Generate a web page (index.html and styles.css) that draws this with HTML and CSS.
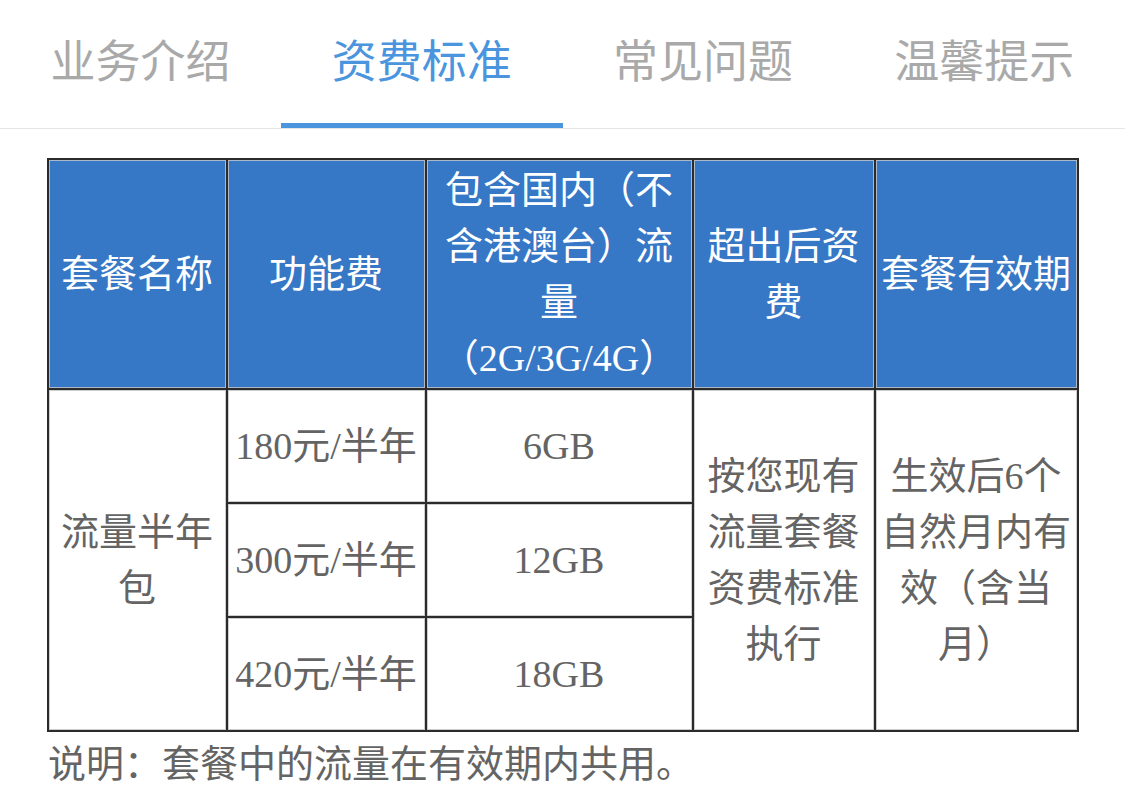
FILE: index.html
```html
<!DOCTYPE html>
<html lang="zh-CN">
<head>
<meta charset="utf-8">
<title>资费标准</title>
<link rel="stylesheet" href="styles.css">
</head>
<body>
<nav class="tabs">
  <div class="tab">业务介绍</div>
  <div class="tab active">资费标准</div>
  <div class="tab">常见问题</div>
  <div class="tab">温馨提示</div>
</nav>
<table class="fee">
  <tr class="head">
    <th class="c1">套餐名称</th>
    <th class="c2">功能费</th>
    <th class="c3">包含国内（不含港澳台）流量<br>（2G/3G/4G）</th>
    <th class="c4">超出后资费</th>
    <th class="c5">套餐有效期</th>
  </tr>
  <tr class="row">
    <td rowspan="3">流量半年包</td>
    <td>180元/半年</td>
    <td>6GB</td>
    <td rowspan="3">按您现有流量套餐资费标准执行</td>
    <td rowspan="3">生效后6个自然月内有效（含当月）</td>
  </tr>
  <tr class="row">
    <td>300元/半年</td>
    <td>12GB</td>
  </tr>
  <tr class="row">
    <td>420元/半年</td>
    <td>18GB</td>
  </tr>
</table>
<p class="note">说明：套餐中的流量在有效期内共用。</p>
</body>
</html>
```
FILE: styles.css
```css
html, body {
  margin: 0;
  padding: 0;
  background: #ffffff;
}
body {
  width: 1125px;
  font-family: "Noto Sans CJK SC", sans-serif;
}
.tabs {
  display: flex;
  border-bottom: 1px solid #e6e6e6;
}
.tab {
  flex: 1;
  height: 128px;
  box-sizing: border-box;
  border-bottom: 5px solid transparent;
  text-align: center;
  font-size: 45px;
  line-height: 118px;
  color: #a9a9a9;
}
.tab.active {
  color: #4a95dd;
  border-bottom-color: #4a95dd;
}
.fee {
  width: 1032px;
  margin: 29px auto 0;
  border-collapse: separate;
  border-spacing: 2px;
  background: #2b2b2b;
  table-layout: fixed;
  font-family: "Liberation Serif", "Noto Sans CJK SC", serif;
  font-size: 38px;
  line-height: 56px;
}
.fee th,
.fee td {
  box-sizing: border-box;
  padding: 0;
  text-align: center;
  vertical-align: middle;
  font-weight: normal;
}
.fee th {
  background: #3677c6;
  color: #ffffff;
  border: 1px solid #aeb9c8;
}
.fee td {
  background: #ffffff;
  color: #646464;
  border: 1px solid #cdcdcd;
}
.head { height: 228px; }
.row { height: 112px; }
.c1 { width: 177px; }
.c2 { width: 197px; }
.c3 { width: 265px; }
.c4 { width: 180px; }
.c5 { width: 201px; }
.note {
  margin: 0 0 0 48px;
  font-size: 38px;
  line-height: 57px;
  color: #646464;
}
```
